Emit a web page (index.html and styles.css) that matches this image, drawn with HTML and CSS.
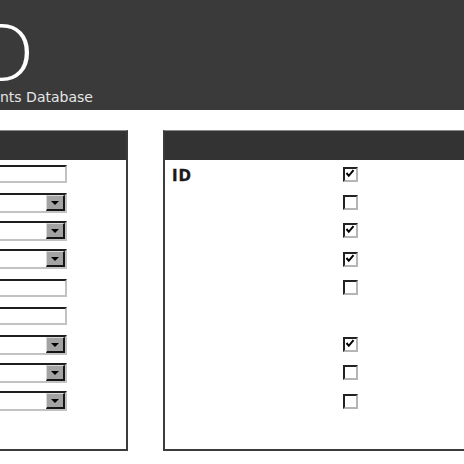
FILE: index.html
```html
<!DOCTYPE html>
<html>
<head>
<meta charset="utf-8">
<link rel="stylesheet" href="styles.css">
</head>
<body>
<header class="site-header">
  <div class="logo">D</div>
  <div class="subtitle">nts Database</div>
</header>
<main class="main">
  <section class="panel panel-left">
    <div class="panel-head"></div>
    <div class="panel-body form-list">
      <div class="row"><input class="text-field" type="text"></div>
      <div class="row"><div class="select"><span class="select-btn"><span class="arrow"></span></span></div></div>
      <div class="row"><div class="select"><span class="select-btn"><span class="arrow"></span></span></div></div>
      <div class="row"><div class="select"><span class="select-btn"><span class="arrow"></span></span></div></div>
      <div class="row"><input class="text-field" type="text"></div>
      <div class="row"><input class="text-field" type="text"></div>
      <div class="row"><div class="select"><span class="select-btn"><span class="arrow"></span></span></div></div>
      <div class="row"><div class="select"><span class="select-btn"><span class="arrow"></span></span></div></div>
      <div class="row"><div class="select"><span class="select-btn"><span class="arrow"></span></span></div></div>
    </div>
  </section>
  <section class="panel panel-right">
    <div class="panel-head"></div>
    <div class="panel-body check-list">
      <div class="crow"><span class="label">ID</span><span class="cb on"><svg viewBox="0 0 10 10"><polyline points="1.5,4 3.8,6.8 8.5,1.2" /></svg></span></div>
      <div class="crow"><span class="label"></span><span class="cb"></span></div>
      <div class="crow"><span class="label"></span><span class="cb on"><svg viewBox="0 0 10 10"><polyline points="1.5,4 3.8,6.8 8.5,1.2" /></svg></span></div>
      <div class="crow"><span class="label"></span><span class="cb on"><svg viewBox="0 0 10 10"><polyline points="1.5,4 3.8,6.8 8.5,1.2" /></svg></span></div>
      <div class="crow"><span class="label"></span><span class="cb"></span></div>
      <div class="crow"><span class="label"></span></div>
      <div class="crow"><span class="label"></span><span class="cb on"><svg viewBox="0 0 10 10"><polyline points="1.5,4 3.8,6.8 8.5,1.2" /></svg></span></div>
      <div class="crow"><span class="label"></span><span class="cb"></span></div>
      <div class="crow"><span class="label"></span><span class="cb"></span></div>
    </div>
  </section>
</main>
</body>
</html>
```
FILE: styles.css
```css
html, body {
  margin: 0;
  padding: 0;
  background: #ffffff;
}
body {
  width: 464px;
  height: 464px;
  overflow: hidden;
  font-family: "DejaVu Sans", Verdana, sans-serif;
  color: #111;
}
.site-header {
  height: 110px;
  box-sizing: border-box;
  background: #3a3a3a;
  padding-top: 13px;
  display: flex;
  flex-direction: column;
  overflow: hidden;
}
.logo {
  font-family: "Lato", "Open Sans", sans-serif;
  font-weight: 300;
  font-size: 80px;
  line-height: 75px;
  height: 75px;
  color: #ffffff;
  margin-left: -27px;
}
.subtitle {
  font-size: 14px;
  line-height: 16px;
  color: #e6e6e6;
  margin-top: 1px;
}
.main {
  display: flex;
  gap: 35px;
  padding-top: 20px;
  align-items: flex-start;
}
.panel {
  flex: none;
  box-sizing: border-box;
  border: 2px solid #3c3c3c;
  border-top-color: #8a8a8a;
  border-top-width: 1px;
  height: 321px;
  background: #fff;
}
.panel-left {
  width: 228px;
  margin-left: -100px;
}
.panel-right {
  width: 340px;
}
.panel-head {
  height: 29px;
  background: #333333;
}
.panel-body {
  display: flex;
  flex-direction: column;
}
.form-list {
  padding-left: 45px;
}
.row {
  height: 28.4px;
  display: flex;
  align-items: center;
}
.text-field {
  box-sizing: border-box;
  width: 120px;
  height: 18px;
  margin: 0;
  padding: 0;
  background: #fff;
  border-style: solid;
  border-width: 2px;
  border-color: #1e1e1e #c2c2c2 #c2c2c2 #1e1e1e;
  outline: none;
}
.select {
  box-sizing: border-box;
  width: 120px;
  height: 20px;
  background: #fff;
  border-style: solid;
  border-width: 2px;
  border-color: #1e1e1e #c2c2c2 #c2c2c2 #1e1e1e;
  display: flex;
  justify-content: flex-end;
}
.select-btn {
  box-sizing: border-box;
  width: 19px;
  height: 16px;
  background: #a3a3a3;
  border-style: solid;
  border-width: 1px 2px 2px 1px;
  border-color: #d8d8d8 #151515 #151515 #d8d8d8;
  display: flex;
  align-items: center;
  justify-content: center;
}
.arrow {
  width: 0;
  height: 0;
  border-left: 4px solid transparent;
  border-right: 4px solid transparent;
  border-top: 4px solid #000;
  margin-top: 1px;
}
.check-list {
  padding-left: 7px;
}
.crow {
  height: 28.4px;
  display: grid;
  grid-template-columns: 171px 14px;
  align-items: center;
}
.label {
  font-size: 15px;
  font-weight: 600;
  letter-spacing: 1px;
  line-height: 16px;
  color: #1a1a1a;
  padding-top: 3px;
  -webkit-text-stroke: 0.3px #1a1a1a;
}
.cb {
  box-sizing: border-box;
  width: 15px;
  height: 15px;
  background: #fff;
  border-style: solid;
  border-width: 2px;
  border-color: #222222 #b5b5b5 #b5b5b5 #222222;
  display: block;
}
.cb svg {
  display: block;
  width: 10px;
  height: 10px;
}
.cb polyline {
  fill: none;
  stroke: #000;
  stroke-width: 2;
}
```
